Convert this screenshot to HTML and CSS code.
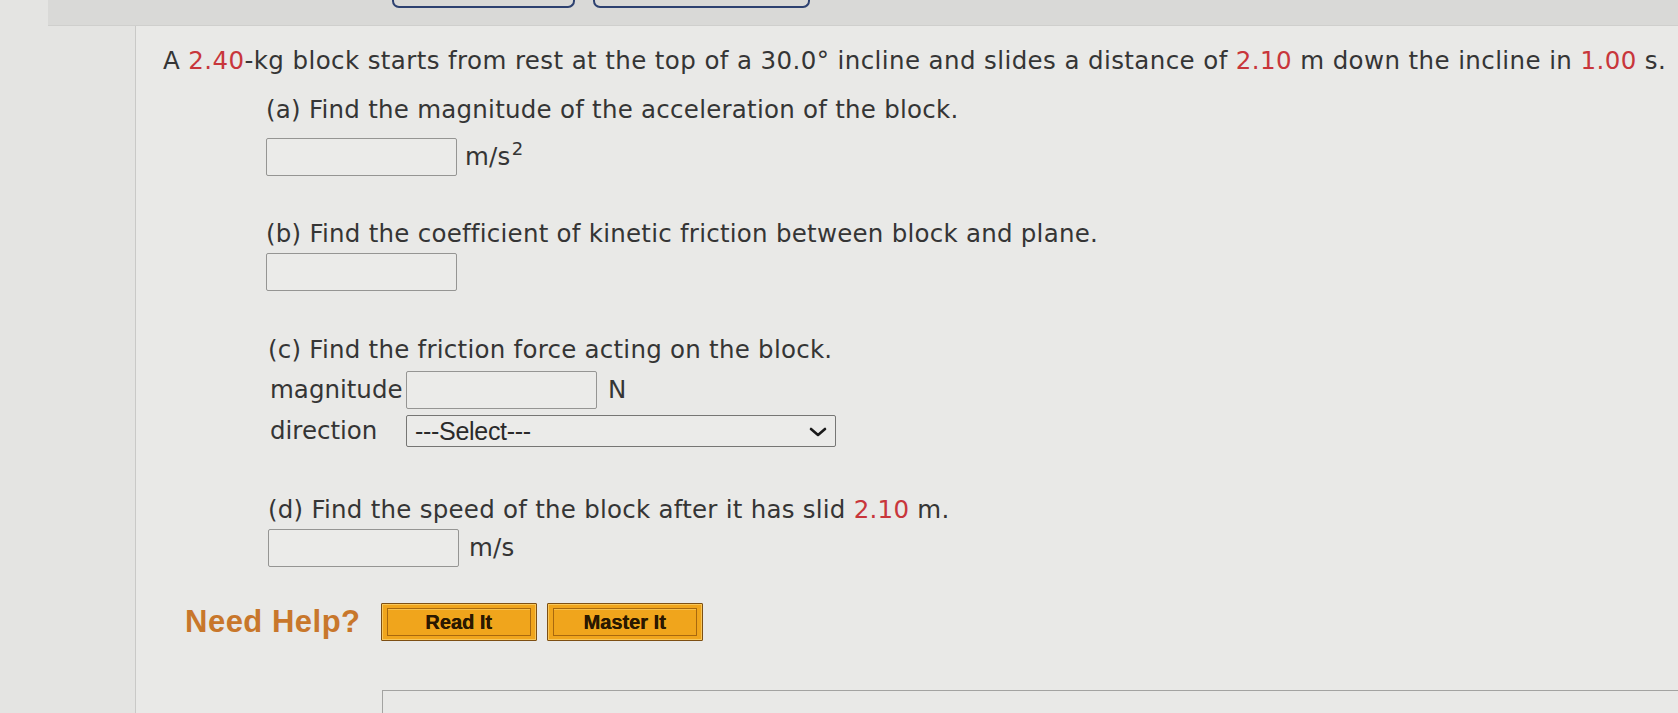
FILE: index.html
```html
<!DOCTYPE html>
<html>
<head>
<meta charset="utf-8">
<title>Question</title>
<link rel="stylesheet" href="styles.css">
</head>
<body>
<div class="topbar">
  <div class="tabs">
    <span class="tab tab-one"></span>
    <span class="tab tab-two"></span>
  </div>
</div>
<div class="layout">
  <aside class="gutter"></aside>
  <main class="panel">
    <p class="intro">A <span class="red">2.40</span>-kg block starts from rest at the top of a 30.0° incline and slides a distance of <span class="red">2.10</span> m down the incline in <span class="red">1.00</span> s.</p>
    <div class="parts">
      <p class="q q-a">(a) Find the magnitude of the acceleration of the block.</p>
      <div class="answer ans-a"><input class="box" type="text"><span class="unit unit-a">m/s<sup>2</sup></span></div>

      <p class="q q-b">(b) Find the coefficient of kinetic friction between block and plane.</p>
      <div class="answer ans-b"><input class="box" type="text"></div>

      <p class="q q-c">(c) Find the friction force acting on the block.</p>
      <div class="answer row-mag"><span class="label">magnitude</span><input class="box" type="text"><span class="unit unit-n">N</span></div>
      <div class="answer row-dir"><span class="label">direction</span>
        <div class="select">
          <span class="select-text">---Select---</span>
          <svg class="chevron" width="18" height="10" viewBox="0 0 18 10"><path d="M2 2 L9 8 L16 2" fill="none" stroke="#1a1a1a" stroke-width="2.6" stroke-linecap="round" stroke-linejoin="round"/></svg>
        </div>
      </div>

      <p class="q q-d">(d) Find the speed of the block after it has slid <span class="red">2.10</span> m.</p>
      <div class="answer ans-d"><input class="box" type="text"><span class="unit unit-d">m/s</span></div>
    </div>

    <div class="help">
      <span class="help-label">Need Help?</span>
      <button class="hbtn"><span class="hbtn-inner">Read It</span></button>
      <button class="hbtn"><span class="hbtn-inner">Master It</span></button>
    </div>

    <div class="next-box"></div>
  </main>
</div>
</body>
</html>
```

FILE: styles.css
```css
* { box-sizing: border-box; }

html, body {
  margin: 0;
  padding: 0;
}

body {
  background: #e4e4e2;
  font-family: "DejaVu Sans", Verdana, sans-serif;
  color: #353535;
  overflow: hidden;
}

.topbar {
  margin-left: 48px;
  height: 26px;
  background: #d9d9d7;
  border-bottom: 1px solid #cfcfcd;
}

.tabs {
  display: flex;
  gap: 18px;
  padding-left: 344px;
}

.tab {
  display: block;
  height: 8px;
  border: 2px solid #2d4170;
  border-top: 0;
  border-radius: 0 0 7px 7px;
}

.tab-one { width: 183px; }
.tab-two { width: 217px; }

.layout {
  display: flex;
  min-height: calc(100vh - 26px);
}

.gutter {
  width: 135px;
  flex: none;
  background: #e4e4e2;
}

.panel {
  flex: 1;
  background: #e9e9e7;
  border-left: 1px solid #c9c9c7;
  padding: 20px 0 0 27px;
}

.intro,
.q {
  margin: 0;
  font-size: 24.5px;
  letter-spacing: 0.25px;
  line-height: 30px;
  white-space: nowrap;
}

.intro { letter-spacing: 0.4px; }

.red { color: #c8363b; }

.parts {
  margin-left: 103px;
}

.q-a { margin-top: 19px; }
.q-b { margin-top: 43px; }
.q-c { margin-top: 44px; padding-left: 2px; }
.q-d { margin-top: 48px; padding-left: 2px; }

.answer {
  display: flex;
  align-items: center;
}

.ans-a { margin-top: 13px; height: 38px; }
.ans-b { margin-top: 4px; height: 38px; }
.row-mag { margin-top: 6px; height: 38px; padding-left: 4px; }
.row-dir { margin-top: 6px; height: 32px; padding-left: 4px; }
.ans-d { margin-top: 4px; height: 38px; padding-left: 2px; }

.box {
  width: 191px;
  height: 38px;
  margin: 0;
  padding: 0 6px;
  background: #ebebe9;
  border: 1px solid #959593;
  border-radius: 2px;
  font: inherit;
  font-size: 18px;
}

.unit {
  font-size: 24.5px;
  letter-spacing: 0.25px;
  line-height: 30px;
  white-space: nowrap;
}

.unit-a { margin-left: 8px; }
.unit-a sup {
  font-size: 18px;
  line-height: 0;
  vertical-align: 10px;
  margin-left: 1px;
}
.unit-n { margin-left: 11px; }
.unit-d { margin-left: 10px; }

.label {
  width: 136px;
  flex: none;
  font-size: 24.5px;
  letter-spacing: 0;
  line-height: 30px;
  white-space: nowrap;
}

.select {
  position: relative;
  width: 430px;
  height: 32px;
  border: 1px solid #767674;
  border-radius: 2px;
  background: #ebebe9;
  display: flex;
  align-items: center;
  padding-left: 8px;
}

.select-text {
  font-family: "Liberation Sans", Arial, sans-serif;
  font-size: 25px;
  color: #2a2a2a;
  letter-spacing: -0.3px;
}

.chevron {
  position: absolute;
  right: 8px;
  top: 11px;
}

.help {
  display: flex;
  align-items: center;
  margin-top: 36px;
  margin-left: 22px;
  height: 38px;
}

.help-label {
  font-family: "Liberation Sans", Arial, sans-serif;
  font-weight: bold;
  font-size: 31px;
  color: #c8772b;
  margin-right: 20px;
  letter-spacing: 0.5px;
}

.hbtn {
  width: 156px;
  height: 38px;
  margin: 0 10px 0 0;
  padding: 4px 5px;
  background: #f0a51c;
  border: 1px solid #7d4f14;
  box-shadow: inset 0 0 0 1px #f8c75a;
  border-radius: 1px;
  display: flex;
}

.hbtn-inner {
  flex: 1;
  display: flex;
  align-items: center;
  justify-content: center;
  border: 1px solid #a8680e;
  box-shadow: inset 0 1px 0 #f9c04a;
  font-family: "Liberation Sans", Arial, sans-serif;
  font-weight: bold;
  font-size: 20px;
  color: #2a1800;
  text-shadow: 0.4px 0 0 #2a1800;
}

.next-box {
  margin-top: 49px;
  margin-left: 219px;
  height: 40px;
  border-top: 1px solid #a3a3a1;
  border-left: 1px solid #a3a3a1;
}
```
